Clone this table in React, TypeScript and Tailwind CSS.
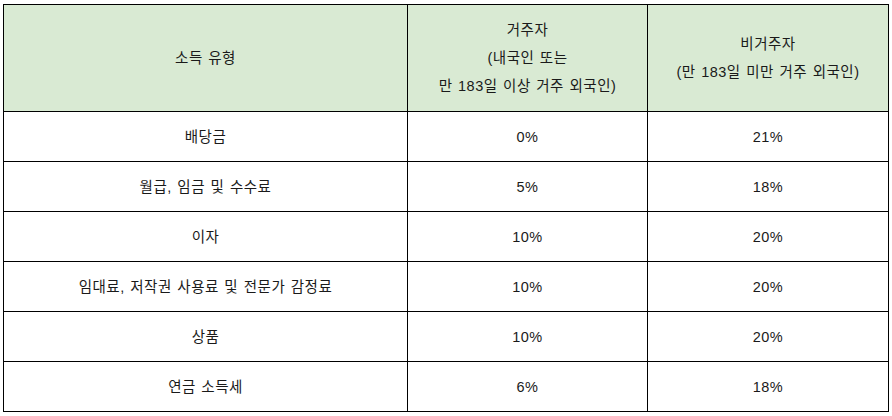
import React from "react";

const rows: [string, string, string][] = [
  ["배당금", "0%", "21%"],
  ["월급, 임금 및 수수료", "5%", "18%"],
  ["이자", "10%", "20%"],
  ["임대료, 저작권 사용료 및 전문가 감정료", "10%", "20%"],
  ["상품", "10%", "20%"],
  ["연금 소득세", "6%", "18%"],
];

export default function App() {
  return (
    <div
      className="w-[892px] h-[416px] bg-white pl-[3px] pt-[4px]"
      style={{ fontFamily: '"Liberation Sans", "Noto Sans CJK KR", sans-serif' }}
    >
      <table className="table-fixed border-collapse w-[885px] text-[14.5px] text-[#1a1a1a] leading-[28px] tracking-[0.5px] [word-spacing:1px]">
        <colgroup>
          <col className="w-[404px]" />
          <col className="w-[240px]" />
          <col className="w-[241px]" />
        </colgroup>
        <thead>
          <tr className="h-[107px] bg-[#d9ead3]">
            <th className="border border-black font-normal text-center align-middle p-0">소득 유형</th>
            <th className="border border-black font-normal text-center align-middle p-0">
              <div>거주자</div>
              <div>(내국인 또는</div>
              <div>만 183일 이상 거주 외국인)</div>
            </th>
            <th className="border border-black font-normal text-center align-middle p-0">
              <div>비거주자</div>
              <div>(만 183일 미만 거주 외국인)</div>
            </th>
          </tr>
        </thead>
        <tbody>
          {rows.map((r, i) => (
            <tr key={i} className="h-[50px]">
              {r.map((c, j) => (
                <td key={j} className="border border-black text-center align-middle p-0">
                  {c}
                </td>
              ))}
            </tr>
          ))}
        </tbody>
      </table>
    </div>
  );
}
